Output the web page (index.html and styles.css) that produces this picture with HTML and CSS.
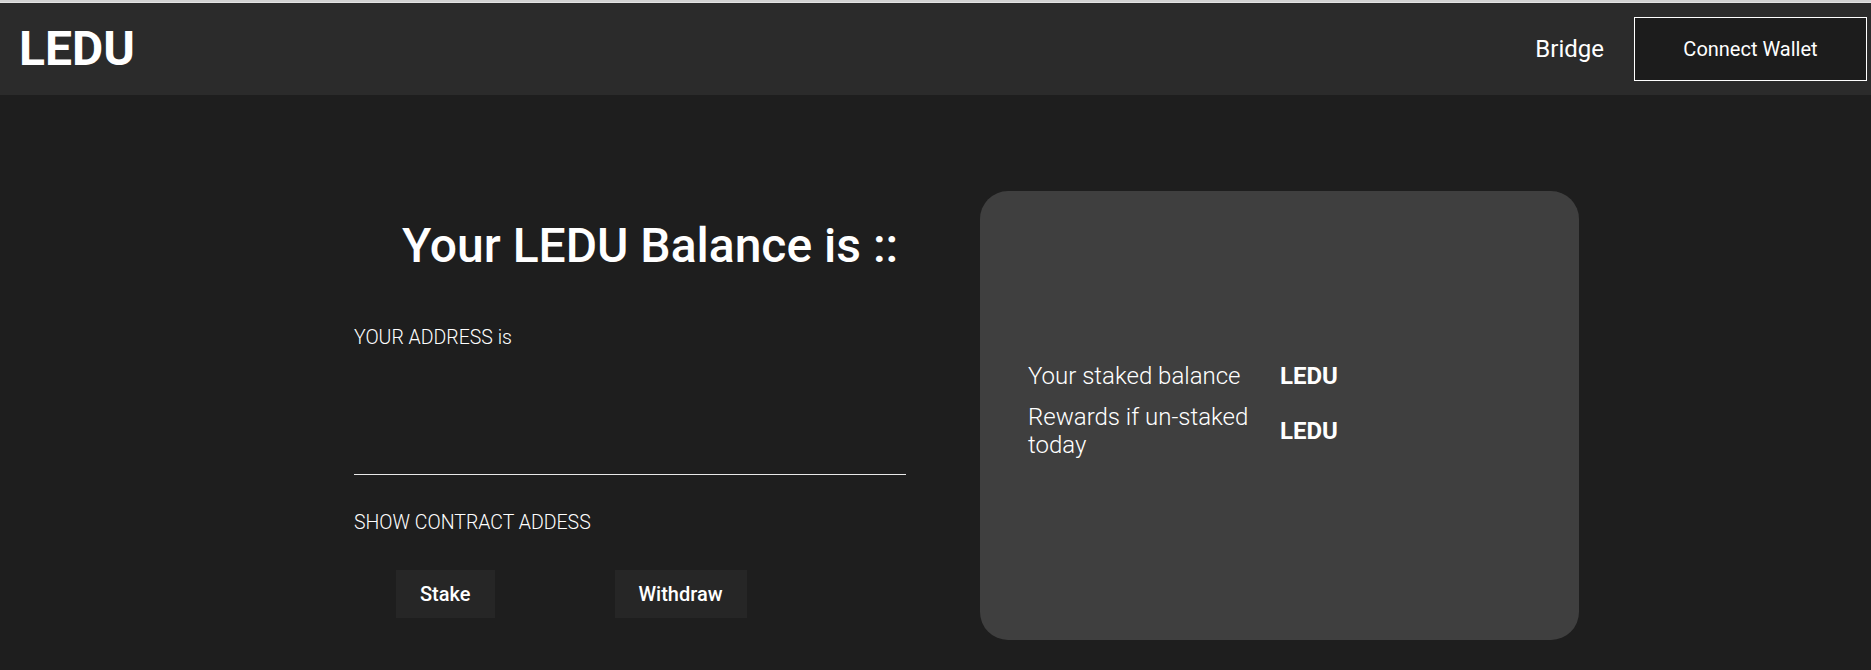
FILE: index.html
```html
<!DOCTYPE html>
<html lang="en">
<head>
<meta charset="utf-8">
<title>LEDU</title>
<link rel="stylesheet" href="styles.css">
</head>
<body>
<div class="topstrip"></div>
<header class="header">
  <div class="logo">LEDU</div>
  <nav class="nav">
    <a class="nav-link">Bridge</a>
    <button class="connect">Connect Wallet</button>
  </nav>
</header>
<main class="main">
  <section class="left">
    <h1 class="title">Your LEDU Balance is ::</h1>
    <p class="label">YOUR ADDRESS is</p>
    <div class="address"></div>
    <p class="label contract">SHOW CONTRACT ADDESS</p>
    <div class="actions">
      <button class="btn">Stake</button>
      <button class="btn">Withdraw</button>
    </div>
  </section>
  <section class="card">
    <div class="stats">
      <div class="stat-label">Your staked balance</div>
      <div class="stat-value">LEDU</div>
      <div class="stat-label">Rewards if un-staked today</div>
      <div class="stat-value">LEDU</div>
    </div>
  </section>
</main>
</body>
</html>
```
FILE: styles.css
```css
* { box-sizing: border-box; }
html, body { margin: 0; padding: 0; }
body {
  background: #1e1e1e;
  color: #ffffff;
  font-family: Roboto, "Liberation Sans", sans-serif;
  height: 670px;
  overflow: hidden;
}
.topstrip {
  height: 3px;
  background: #d2d2d2;
  border-bottom: 1px solid #e4e4e4;
}
.header {
  height: 92px;
  background: #2b2b2b;
  display: flex;
  align-items: center;
  justify-content: space-between;
  padding: 0 4px 0 19px;
}
.logo {
  font-size: 48px;
  font-weight: 700;
  line-height: 1;
}
.nav {
  display: flex;
  align-items: center;
  gap: 30px;
}
.nav-link {
  font-size: 24px;
  font-weight: 400;
  color: #ffffff;
}
.connect {
  height: 64px;
  width: 233px;
  background: #1c1c1c;
  color: #ffffff;
  border: 1px solid #ffffff;
  font-family: inherit;
  font-size: 20px;
  font-weight: 400;
  padding: 0;
}
.main {
  display: flex;
  align-items: flex-start;
  padding: 96px 0 0 354px;
  gap: 74px;
}
.left {
  width: 552px;
  padding-top: 26px;
}
.title {
  margin: 0;
  padding-left: 48px;
  font-size: 48px;
  font-weight: 500;
  line-height: normal;
}
.label {
  margin: 52px 0 0;
  font-size: 19.5px;
  font-weight: 300;
  line-height: normal;
}
.address {
  height: 126px;
  border-bottom: 1px solid #e8e8e8;
}
.contract {
  margin-top: 36px;
}
.actions {
  display: flex;
  gap: 120px;
  padding-left: 42px;
  margin-top: 36px;
}
.btn {
  height: 48px;
  padding: 0 24px;
  background: #262626;
  color: #ffffff;
  border: none;
  font-family: inherit;
  font-size: 20px;
  font-weight: 500;
}
.card {
  width: 599px;
  height: 449px;
  background: #3f3f3f;
  border-radius: 28px;
  display: flex;
  flex-direction: column;
  justify-content: center;
  padding: 0 48px 10px;
}
.stats {
  display: grid;
  grid-template-columns: 224px auto;
  column-gap: 28px;
  row-gap: 13px;
  align-items: center;
  justify-content: start;
}
.stat-label {
  font-size: 24px;
  font-weight: 300;
  line-height: 28px;
}
.stat-value {
  font-size: 24px;
  font-weight: 700;
  line-height: 28px;
}
```
